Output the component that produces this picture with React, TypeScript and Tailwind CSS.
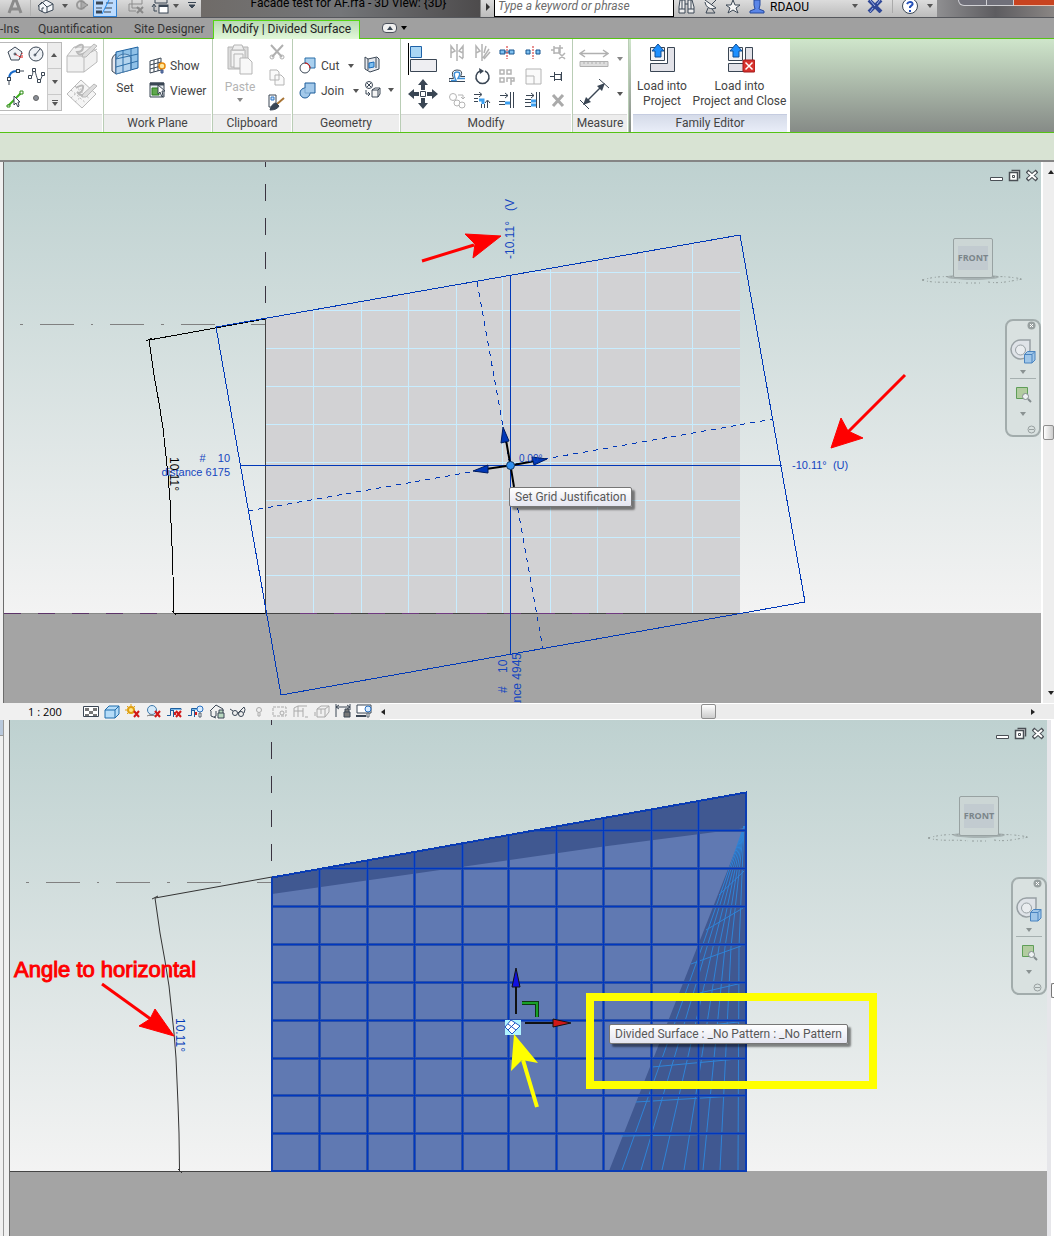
import type { ReactNode } from "react";

const INK = "#3a4654";
const BLUE = "#0038b8";

function Svg({ w, h, children }: { w: number; h: number; children: ReactNode }) {
    return (
        <svg width={w} height={h} viewBox={`0 0 ${w} ${h}`} fill="none" stroke={INK} className="shrink-0" aria-hidden="true">
            {children}
        </svg>
    );
}

function Caret({ className = "text-[#555]" }: { className?: string }) {
    return (
        <svg width="6" height="4" viewBox="0 0 6 4" className={`shrink-0 ${className}`} aria-hidden="true">
            <path d="M0 0h6L3 4z" fill="currentColor" />
        </svg>
    );
}

/* ---------- quick access bar ---------- */

function TitleBar() {
    return (
        <header className="flex h-[18px] overflow-hidden border-b border-[#55575c] bg-[#c9c9c9]">
            <div className="flex w-[201px] shrink-0 items-start bg-linear-to-b from-[#dadada] to-[#b8b8b8]">
                <button aria-label="Application menu" className="flex w-[31px] justify-center border-r border-[#b0b0b0]">
                    <Svg w={16} h={16}>
                        <path d="M2 13L7 0H9L14 13M4 9H12" stroke="#8b8b8b" strokeWidth="3" />
                    </Svg>
                </button>
                <button aria-label="Home" className="flex w-6 justify-end pr-px">
                    <Svg w={17} h={14}>
                        <path d="M1 6L9 0L16 4V10L8 13L2 10V6z" fill="#f4f6f8" />
                        <path d="M1 6L5 2L10 7V13M10 7L16 4M5 12V8H7" />
                    </Svg>
                </button>
                <span className="ml-1 flex h-4 w-3 items-center justify-center pb-1"><Caret /></span>
                <button aria-label="Redo" className="ml-1 flex">
                    <Svg w={14} h={13}>
                        <circle cx="6" cy="5" r="4" stroke="#999" strokeWidth="2" />
                        <path d="M6 1L13 5L6 9z" fill="#aaa" stroke="#8b8b8b" />
                    </Svg>
                </button>
                <button aria-label="Thin lines" className="ml-1 flex h-[17px] w-6 items-start justify-center border border-t-0 border-[#2f7fd0] bg-[#bcdcff]">
                    <Svg w={20} h={14}>
                        <path d="M1 3H8M1 12H7" strokeWidth="3" />
                        <path d="M1 8H7M11 3H18M10 8H17M9 12H16" />
                        <path d="M14 0L7 14" stroke="#1e88f0" />
                    </Svg>
                </button>
                <button aria-label="Close hidden windows" className="ml-[11px] flex">
                    <Svg w={17} h={14}>
                        <path d="M4 0V4H14V0M1 4V11H8M1 4H4M4 4V8H12" stroke="#8d8d8d" />
                        <path d="M9 7L15 13M15 7L9 13" stroke="#888" strokeWidth="2" />
                    </Svg>
                </button>
                <button aria-label="Switch windows" className="ml-1.5 flex">
                    <Svg w={19} h={14}>
                        <path d="M4 0V3H16V0" />
                        <rect x="8" y="5" width="9" height="8" fill="#fff" />
                        <path d="M8 6H17" strokeWidth="2" />
                        <path d="M3 5V11H6M1 7L3 4L5 7" />
                    </Svg>
                </button>
                <span className="flex h-4 w-3 items-center justify-center pb-1"><Caret /></span>
                <button aria-label="Customize toolbar" className="ml-1.5 flex">
                    <Svg w={8} h={10}>
                        <path d="M0 2.5H8" />
                        <path d="M1 5H7L4 8z" fill={INK} />
                    </Svg>
                </button>
            </div>
            <h1 className="min-w-0 flex-1 bg-linear-to-r from-[#6f6b68] via-[#747679] to-[#4d4b4c] pl-4 text-center text-[12px] leading-[6px] whitespace-nowrap text-black">
                Facade test for AF.rfa - 3D View: {"{3D}"}
            </h1>
            <div className="flex w-[457px] shrink-0 items-start bg-linear-to-b from-[#dcdcdc] to-[#bcbcbc]">
                <button aria-label="Collapse search" className="flex h-[17px] w-[14px] shrink-0 items-center justify-center border-l border-[#888] pb-1">
                    <Svg w={4} h={8}>
                        <path d="M0 0L4 4L0 8z" fill="#333" stroke="none" />
                    </Svg>
                </button>
                <input
                    aria-label="Search"
                    placeholder="Type a keyword or phrase"
                    className="h-[17px] w-[180px] shrink-0 border border-t-0 border-black bg-white px-[3px] pb-1 text-[12px] italic placeholder:text-[#6c6c6c]"
                />
                <button aria-label="Find" className="ml-1 flex">
                    <Svg w={17} h={14}>
                        <path d="M2 0H7V13H1V7zM10 0H14L16 7V13H10z" fill="#eee" />
                        <path d="M7 4H10M1 9H7M10 9H16M4 0V9M13 0V9" />
                    </Svg>
                </button>
                <button aria-label="Subscription" className="ml-2 flex">
                    <Svg w={16} h={14}>
                        <path d="M2 2C3 8 8 10 13 8L2 0" fill="#f4f4f4" />
                        <path d="M8 5L13 0M5 8L3 13H12L9 9" />
                    </Svg>
                </button>
                <button aria-label="Favorites" className="ml-[6px] flex">
                    <Svg w={16} h={14}>
                        <path d="M8 0L10 5H15L11 8L13 13L8 10L3 13L5 8L1 5H6z" fill="#f4f4f4" />
                    </Svg>
                </button>
                <button className="ml-2 flex text-[12px] leading-[14px] text-black">
                    <Svg w={16} h={14}>
                        <path d="M5 0H11V5L10 9L15 11V13H1V11L6 9L5 5z" fill="#5b86e8" stroke="#274a9e" />
                    </Svg>
                    <span className="ml-[5px]">RDAOU</span>
                </button>
                <span className="ml-auto flex h-4 items-center pb-1"><Caret /></span>
                <button aria-label="Exchange apps" className="ml-[9px] flex w-[26px] border-r border-[#aaa]">
                    <Svg w={16} h={13}>
                        <path d="M2 0L14 12M14 0L2 12" stroke="#2f4796" strokeWidth="4" />
                        <path d="M3 0L8 6M13 0L10 4M3 12L6 8" stroke="#9fb4ea" strokeWidth="1" />
                    </Svg>
                </button>
                <button aria-label="Help" className="ml-2 flex">
                    <Svg w={18} h={15}>
                        <circle cx="9" cy="6" r="7.5" fill="#fff" />
                        <path d="M6 4Q7 2 9 2Q12 2 11.500 4.500L9 7V8M9 10V12" stroke="#2450b8" strokeWidth="2" />
                    </Svg>
                </button>
                <span className="mr-1 ml-2 flex h-4 items-center pb-1"><Caret /></span>
            </div>
            <div className="flex w-[117px] shrink-0 justify-end bg-linear-to-r from-[#8f8f91] via-[#5d5c60] to-[#8a8684]">
                <button aria-label="Minimize" className="flex h-[6px] w-[29px] justify-center rounded-bl-md border border-t-0 border-[#d0d0d4] bg-[#70707a]" />
                <button aria-label="Maximize" className="flex h-[6px] w-[27px] justify-center border-r border-b border-[#d0d0d4] bg-[#70707a]" />
                <button aria-label="Close" className="flex h-[6px] w-10 justify-center border-b border-[#e8c0b0] bg-[#c8431f]" />
            </div>
        </header>
    );
}

function Tabs() {
    return (
        <nav className="flex h-[21px] items-end border-b border-[#55c314] bg-[#a0a0a0] text-[12px] leading-[18px] whitespace-nowrap text-[#333]">
            <a href="#ins" className="w-[38px]">-Ins</a>
            <a href="#quantification" className="w-24">Quantification</a>
            <a href="#site" className="w-[79px]">Site Designer</a>
            <a href="#modify" className="-mb-px h-[19px] w-[147px] border-x border-t border-[#55d614] bg-linear-to-b from-[#b9d9b4] to-[#e2f8d9] text-center leading-4 text-[#222]">
                Modify | Divided Surface
            </a>
            <button aria-label="Minimize ribbon" className="mb-[5px] ml-[22px] flex h-[10px] w-[15px] items-center justify-center rounded-sm border border-[#4a4f5a] bg-[#f0f0f0]">
                <Svg w={6} h={4}><path d="M0 4H6L3 0z" fill={INK} stroke="none" /></Svg>
            </button>
            <span className="mb-2 ml-1 flex"><Caret className="text-black" /></span>
        </nav>
    );
}

/* ---------- ribbon ---------- */

function Panel({ title, width, children, blue }: { title: string; width: string; children: ReactNode; blue?: boolean }) {
    return (
        <section className={`flex h-[93px] shrink-0 flex-col bg-white ${width} ${blue ? "border-x-2 border-white" : "border-r border-[#b9cdb5]"}`}>
            <div className="flex min-h-0 flex-1">{children}</div>
            <h2 className={`mr-px h-[18px] border-t text-center text-[12px] leading-4 whitespace-nowrap text-[#444] ${blue ? "border-[#c5cce0] bg-linear-to-b from-[#d5dbe9] to-[#e9edf8]" : "border-[#d8d8d8] bg-[#ededed]"}`}>
                {title}
            </h2>
        </section>
    );
}

function DrawPanel() {
    return (
        <Panel title="" width="w-[104px]">
            <div className="mt-[3px] flex h-[69px] w-[62px] border border-l-0 border-[#b9b9b9]">
                <div className="grid flex-1 grid-cols-2 place-items-center pl-1">
                    <button aria-label="Polygon"><Svg w={18} h={18}>
                        <path d="M9 2L16 7L13 15H5L2 7z" fill="#eef1f5" />
                        <path d="M9 9L16 13V8" stroke="#e01010" strokeDasharray="3 1" />
                        <circle cx="9" cy="9" r="1" />
                    </Svg></button>
                    <button aria-label="Circle"><Svg w={18} h={18}>
                        <circle cx="9" cy="9" r="7" fill="#eef1f5" /><path d="M8 10L13 4" /><circle cx="8" cy="10" r="1" />
                    </Svg></button>
                    <button aria-label="Fillet arc"><Svg w={18} h={18}>
                        <path d="M3 12Q3 4 11 4" stroke="#1668c8" strokeWidth="2" /><path d="M3 14V18M13 4H18" />
                        <rect x="1.500" y="10.500" width="3" height="3" fill="#fff" /><rect x="10.500" y="2.500" width="3" height="3" fill="#fff" />
                    </Svg></button>
                    <button aria-label="Spline"><Svg w={18} h={18}>
                        <path d="M3 10C7 10 5 2 7 3S10 16 13 14L16 7" />
                        <path d="M1.500 8.500h3v3h-3zM5.500 1.500h3v3h-3zM10.500 12.500h3v3h-3zM14.500 5.500h3v3h-3z" fill="#fff" />
                    </Svg></button>
                    <button aria-label="Pick lines"><Svg w={18} h={18}>
                        <path d="M2 16L16 2" stroke="#3eb01c" strokeWidth="2" /><path d="M1 15h3v2h-3zM14 1h3v3h-3z" fill="#fff" stroke="#2b8a10" />
                        <path d="M8 6V15L10 13L12 17L13 16L12 12H14z" fill="#fff" />
                    </Svg></button>
                    <button aria-label="Point"><Svg w={18} h={18}><circle cx="9" cy="8" r="2.500" fill="#8a8f98" stroke="#666" /></Svg></button>
                </div>
                <div className="flex w-[14px] flex-col border-l border-[#c9c9c9] bg-[#ececec]">
                    <button aria-label="Scroll up" className="flex flex-1 rotate-180 items-center justify-center"><Caret /></button>
                    <button aria-label="Scroll down" className="flex flex-1 items-center justify-center border-y border-[#c9c9c9]"><Caret /></button>
                    <button aria-label="Expand gallery" className="flex h-[15px] flex-col items-center justify-center gap-px"><span className="h-px w-[6px] bg-[#555]" /><Caret /></button>
                </div>
            </div>
            <div className="ml-1 flex flex-col gap-[5px] pt-1">
                <button aria-label="Draw on face"><Svg w={32} h={31}>
                    <g stroke="#b9b9b9" fill="#f0f0f0">
                        <path d="M1 13L8 4H25L31 9V19L18 29H1z" /><path d="M1 13H18L31 6M18 13V29" fill="none" />
                        <path d="M9 5Q17 -1 17 4T11 9Q13 14 20 9" fill="none" strokeWidth="2" />
                        <path d="M17 11L28 1L31 3L20 14L16 14z" fill="#ddd" />
                    </g>
                </Svg></button>
                <button aria-label="Draw on work plane"><Svg w={32} h={31}>
                    <g stroke="#b9b9b9" fill="#f5f5f5">
                        <path d="M1 15L15 1L30 15L16 29z" /><path d="M5 11L21 25M9 7L25 21M5 19L20 5M9 23L25 9" strokeDasharray="2 2" />
                        <path d="M10 9Q18 4 17 9T12 14Q14 18 20 14" fill="none" strokeWidth="2" />
                        <path d="M17 15L28 5L31 7L20 18L16 18z" fill="#ddd" />
                    </g>
                </Svg></button>
            </div>
        </Panel>
    );
}

function WorkPlanePanel() {
    return (
        <Panel title="Work Plane" width="w-[109px]">
            <button className="flex w-[42px] flex-col items-center pt-[7px] text-[12px] leading-[14px] text-[#444]">
                <Svg w={28} h={30}>
                    <path d="M1 13Q2 9 5 8V28L1 25z" fill="#e8e8ee" />
                    <path d="M5 6L27 1V22L5 28z" fill="#8fc1e8" stroke="#1a5f9e" />
                    <path d="M5 13Q8 8 14 8Q19 8 20 12V24L5 28z" fill="#b4d4ee" stroke="#4a7ba8" />
                    <path d="M5 13L27 8M5 21L27 15M12 4V26M20 3V24" stroke="#2e6fa8" />
                </Svg>
                <span className="mt-[5px]">Set</span>
            </button>
            <div className="flex flex-col gap-2 pt-[18px] pl-[3px] text-[12px] leading-4 text-[#444]">
                <button className="flex items-center gap-1"><Svg w={17} h={17}>
                    <path d="M1 4L12 1V13L1 16zM1 8L12 5M1 12L12 9M5 3V15M9 2V14" />
                    <circle cx="13" cy="9" r="3" fill="#ffe9a0" stroke="#e8890c" strokeWidth="1.500" /><path d="M12 13h2v3h-2z" fill="#6c86b8" stroke="#41598c" />
                </Svg>Show</button>
                <button className="flex items-center gap-1"><Svg w={17} h={17}>
                    <path d="M1 1H15V15H1z" fill="#e8edf2" /><path d="M1 2H15" strokeWidth="3" />
                    <path d="M3 6H10V13H3z" fill="#5ea84c" stroke="#2b7a1c" /><path d="M9 3V12L11 10L13 15L14 14L13 9H16z" fill="#fff" />
                </Svg>Viewer</button>
            </div>
        </Panel>
    );
}

function ClipboardPanel() {
    return (
        <Panel title="Clipboard" width="w-20">
            <button disabled className="flex w-[54px] flex-col items-center pt-1 text-[12px] leading-[14px] text-[#b4b4b4]">
                <Svg w={28} h={32}>
                    <g stroke="#b5b5b5">
                        <path d="M2 4H22V26H2z" fill="#dcdcdc" /><path d="M5 7H19V24H5z" fill="#f4f4f4" /><path d="M8 2H16L18 7H6z" fill="#eee" />
                        <path d="M8 11H17V25H8z" fill="#f4f4f4" /><path d="M14 15H22L26 19V31H14z" fill="#f8f8f8" />
                    </g>
                </Svg>
                <span className="mt-[5px] mb-1">Paste</span>
                <Caret className="text-[#888]" />
            </button>
            <div className="flex flex-col items-center gap-2 pt-[5px] pl-px">
                <button disabled aria-label="Cut to clipboard"><Svg w={16} h={17}>
                    <path d="M2 1L13 13M14 1L3 13" stroke="#b0b0b0" strokeWidth="2" /><circle cx="3" cy="13" r="2" stroke="#b0b0b0" /><circle cx="13" cy="13" r="2" stroke="#b0b0b0" />
                </Svg></button>
                <button disabled aria-label="Copy to clipboard"><Svg w={16} h={17}>
                    <path d="M1 1H8L10 3V11H1zM6 6H12L15 9V16H6z" fill="#fafafa" stroke="#b5b5b5" />
                </Svg></button>
                <button aria-label="Match type"><Svg w={17} h={17}>
                    <path d="M1 1H8V13H1z" fill="#fff" /><path d="M3 3H6V6H3z" fill="#cfe4fa" stroke="#2a74c4" />
                    <path d="M16 4L9 10" stroke="#a87434" strokeWidth="2" /><path d="M2 16Q4 9 8 9L11 12Q9 16 2 16z" fill={INK} />
                </Svg></button>
            </div>
        </Panel>
    );
}

function GeometryPanel() {
    return (
        <Panel title="Geometry" width="w-[108px]">
            <div className="flex w-[66px] flex-col gap-2 pt-[18px] pl-[6px] text-[12px] leading-4 text-[#444]">
                <button className="flex items-center gap-[5px]"><Svg w={17} h={17}>
                    <path d="M6 1H16V11H6z" fill="#a9d0ef" stroke="#2b6ea8" /><circle cx="6" cy="11" r="5" fill="#fff" /><path d="M6 6A5 5 0 0 1 11 11" stroke="#e01010" />
                </Svg>Cut<span className="ml-1"><Caret /></span></button>
                <button className="flex items-center gap-[5px]"><Svg w={17} h={17}>
                    <path d="M6 1H16V11H11A5 5 0 1 1 6 6z" fill="#a3c9ea" stroke="#1c5c9a" /><path d="M11 11H6V6" stroke="#7aa8d0" />
                </Svg>Join<span className="ml-1"><Caret /></span></button>
            </div>
            <div className="ml-[5px] flex flex-col gap-2 pt-[17px]">
                <button aria-label="Split face" className="flex"><Svg w={17} h={17}>
                    <path d="M1 1L4 3L13 1L15 3V13L6 16L1 13z" fill="#e6e9ee" /><path d="M4 3V14M12 2V12" /><path d="M5 7L10 6V11L5 12z" fill="#7fc0f0" stroke="#1a6ab8" />
                </Svg></button>
                <button aria-label="Demolish" className="flex items-center gap-[6px]"><Svg w={18} h={17}>
                    <circle cx="5" cy="4" r="3.500" /><path d="M3 2L7 6M7 2L3 6M2 9V13H5M4 11L6 13L4 15" />
                    <path d="M8 9L11 7H16V13L14 16H8zM8 9H14L16 7M14 9V16" fill="#f4f4f4" />
                </Svg><Caret /></button>
            </div>
        </Panel>
    );
}

function ModifyPanel() {
    const gray = "#b4b4b4";
    return (
        <Panel title="Modify" width="w-[172px]">
            <div className="flex w-11 flex-col items-center gap-[3px] pt-1">
                <button aria-label="Align"><Svg w={32} h={32}>
                    <path d="M1.500 0V32" stroke="#000" /><path d="M3.500 3.500H14.500V14.500H3.500z" fill="#a9d6f5" stroke="#1e62a8" /><path d="M3.500 16.500H29.500V28.500H3.500z" fill="#eeeef2" />
                </Svg></button>
                <button aria-label="Move"><Svg w={32} h={32}>
                    <path d="M16 1L21 7H18V12H14V7H11zM16 31L21 25H18V20H14V25H11zM1 16L7 11V14H12V18H7V21zM31 16L25 11V14H20V18H25V21z" fill={INK} stroke="none" />
                    <path d="M13.500 13.500h5v5h-5z" fill="#fff" />
                </Svg></button>
            </div>
            <div className="grid h-[73px] w-[126px] grid-cols-5 place-items-center pt-[2px]">
                <button disabled aria-label="Mirror pick axis"><Svg w={17} h={17}><path d="M2 14V2L6 7L2 9M8 0V17M14 14V2L10 7L14 9M10 12L14 15" stroke={gray} strokeWidth="1.500" /></Svg></button>
                <button disabled aria-label="Mirror draw axis"><Svg w={17} h={17}><path d="M2 14V2L6 7L2 9M8 0V17M12 2L10 9M15 5L9 14M16 8L10 15" stroke={gray} strokeWidth="1.500" /></Svg></button>
                <button aria-label="Split element"><Svg w={17} h={17}><path d="M1 6H6V10H1zM10 6H15V10H10z" fill="#7fc0f0" stroke="#17548f" /><path d="M5 8H11" stroke="#17548f" /><path d="M8 2V15" stroke="#d02020" strokeDasharray="2 1" /></Svg></button>
                <button aria-label="Split with gap"><Svg w={17} h={17}><path d="M1 6H5V10H1zM11 6H15V10H11z" fill="#7fc0f0" stroke="#17548f" /><path d="M8 2V15" stroke="#d02020" strokeDasharray="2 1" /></Svg></button>
                <button disabled aria-label="Unpin"><Svg w={17} h={17}><path d="M1 6H4M4 2V10M4 4H9V9H4M10 1V9M10 4H13M9 9L15 15M15 9L9 15" stroke={gray} strokeWidth="1.500" /></Svg></button>
                <button aria-label="Offset"><Svg w={17} h={17}><path d="M0 13.500H16M0 14V10.500H4.500Q1 2 8 2T11.500 8.500H16" /><path d="M2 12.500H7Q3 4 8 4T9 10.500H16" stroke="#3d8fd8" strokeWidth="1.500" /></Svg></button>
                <button aria-label="Rotate"><Svg w={17} h={17}><path d="M11 3A6.500 6.500 0 1 1 6 3" strokeWidth="1.500" /><path d="M5 0L10 3L6 6z" fill={INK} stroke="none" /></Svg></button>
                <button disabled aria-label="Array"><Svg w={17} h={17}><path d="M1 2H5V6H1zM8 2H12V6H8zM1 10H5V14H1zM12 10H8V14M12 17V10H15V13H12" stroke={gray} strokeWidth="1.500" /></Svg></button>
                <button disabled aria-label="Scale"><Svg w={17} h={17}><path d="M1 1H16V16H1zM1 8H9V16" fill="#fafafa" stroke={gray} /></Svg></button>
                <button aria-label="Pin"><Svg w={17} h={17}><path d="M0 8.500H4M4.500 4V13M5 6.500H11V11.500H5M11.500 4V13" /></Svg></button>
                <button disabled aria-label="Copy"><Svg w={17} h={17}><circle cx="4" cy="5" r="3.500" stroke={gray} /><path d="M9 3H14V7M12 5L14 7L16 5" stroke={gray} /><circle cx="8" cy="11" r="3" stroke={gray} /><circle cx="13" cy="13" r="3" fill="#fff" stroke={gray} /></Svg></button>
                <button aria-label="Trim to corner"><Svg w={17} h={17}><path d="M0 2.500H7M5 0L8 2.500L5 5M0 6.500H4M0 9.500H4M13.500 16V9M11 11L13.500 8L16 11M7.500 12V16M10.500 12V16" /><path d="M5 8H9V12" stroke="#3da0f0" strokeWidth="3" /></Svg></button>
                <button aria-label="Trim single"><Svg w={17} h={17}><path d="M1 3.500H9M6 1L9 3.500L6 6M0 9.500H6M0 12.500H6M11.500 0V16M14.500 0V16" /><path d="M6 11H11" stroke="#3da0f0" strokeWidth="3" /></Svg></button>
                <button aria-label="Trim multiple"><Svg w={17} h={17}><path d="M1 3.500H9M6 1L9 3.500L6 6M0 7.500H6M0 10.500H6M0 14.500H6M11.500 0V16M14.500 0V16" /><path d="M6 9H11M6 13H11" stroke="#3da0f0" strokeWidth="3" /></Svg></button>
                <button disabled aria-label="Delete"><Svg w={17} h={17}><path d="M3 3L13 14M13 3L3 14" stroke="#aaa" strokeWidth="3" /></Svg></button>
            </div>
        </Panel>
    );
}

function MeasurePanel() {
    return (
        <Panel title="Measure" width="w-[56px]">
            <div className="flex flex-col gap-2 pt-2 pl-1.5">
                <button disabled aria-label="Measure distance" className="flex h-6 items-center gap-2"><Svg w={30} h={20}>
                    <path d="M2 4.500H28M6 1L1 4.500L6 8M24 1L29 4.500L24 8" stroke="#b0b0b0" strokeWidth="1.500" />
                    <path d="M1 12.500H29V17.500H1z" fill="#ddd" stroke="#b0b0b0" /><path d="M5 12V15M9 12V15M13 12V15M17 12V15M21 12V15M25 12V15" stroke="#b0b0b0" />
                </Svg><Caret className="text-[#888]" /></button>
                <button aria-label="Aligned dimension" className="flex items-center gap-2"><Svg w={30} h={30}>
                    <path d="M6 24L24 6" strokeWidth="1.500" /><path d="M4 26L7 18L12 23zM26 4L23 12L18 7z" fill={INK} stroke="none" />
                    <path d="M1 21L10 30M20 0L30 9" />
                </Svg><Caret /></button>
            </div>
        </Panel>
    );
}

function LoadGlyph({ close }: { close?: boolean }) {
    return (
        <Svg w={30} h={31}>
            <path d="M3.500 5.500H17.500V18.500H3.500z" fill="#f2f2f5" />
            <path d="M20.500 5.500H27.500V29.500H3.500V21.500H20.500z" fill="#e2e2e8" />
            <path d="M11 2L17 9H14V15H8V9H5z" fill="#1e90ff" stroke="#0d4f98" />
            {close && <>
                <rect x="18" y="18" width="12" height="12" rx="1" fill="#d8332e" stroke="#a01818" />
                <path d="M20.500 20.500L27.500 27.500M27.500 20.500L20.500 27.500" stroke="#fff" strokeWidth="1.500" />
            </>}
        </Svg>
    );
}

function Ribbon() {
    return (
        <div className="flex border-b border-[#55c314] bg-linear-to-b from-[#cfe6cb] to-[#868b87]">
            <DrawPanel />
            <WorkPlanePanel />
            <ClipboardPanel />
            <GeometryPanel />
            <ModifyPanel />
            <MeasurePanel />
            <div className="ml-[2px]">
                <Panel title="Family Editor" width="w-[159px]" blue>
                    <button className="flex w-[58px] flex-col items-center pt-[3px] text-[12px] leading-[15px] whitespace-nowrap text-[#444]">
                        <LoadGlyph />
                        <span className="mt-[6px]">Load into<br />Project</span>
                    </button>
                    <button className="flex flex-1 flex-col items-center pt-[3px] text-[12px] leading-[15px] whitespace-nowrap text-[#444]">
                        <LoadGlyph close />
                        <span className="mt-[6px]">Load into<br />Project and Close</span>
                    </button>
                </Panel>
            </div>
        </div>
    );
}

/* ---------- view overlays ---------- */

function ViewControls() {
    return (
        <div className="absolute top-[6px] right-[3px] flex items-center gap-[5px]">
            <button aria-label="Minimize view"><Svg w={13} h={14}><path d="M.5 9.500h12v3H.5z" fill="#fff" stroke="#4a4f55" /></Svg></button>
            <button aria-label="Restore view"><Svg w={13} h={14}><path d="M3.500 2.500h8v8M1.500 4.500h8v8h-8z" fill="#fff" stroke="#4a4f55" strokeWidth="1.500" /><path d="M4.500 7.500h2v2h-2z" stroke="#4a4f55" /></Svg></button>
            <button aria-label="Close view"><Svg w={12} h={14}><path d="M1 3L11 12M11 3L1 12" stroke="#4a4f55" strokeWidth="4" /><path d="M2 4L10 11M10 4L2 11" stroke="#fff" strokeWidth="2" /></Svg></button>
        </div>
    );
}

function ViewCube() {
    return (
        <div className="absolute top-[76px] right-[15px] flex w-[106px] flex-col items-center">
            <button className="z-10 flex h-10 w-10 items-center justify-center rounded-xs border border-[#98a2a2] bg-[#ccd6d5]">
                <span className="bg-[#c2cbd0] py-1 font-['Open_Sans',sans-serif] text-[9px] leading-4 font-bold text-[#7b858a]">FRONT</span>
            </button>
            <svg width="106" height="12" viewBox="0 0 106 12" className="-mt-1" aria-hidden="true">
                <ellipse cx="53" cy="3" rx="26" ry="3" fill="#98a3a3" opacity=".7" />
                <path d="M2 6C20 1 30 3 38 3M2 6C16 10 30 7 42 9M46 9H62M68 8C80 10 90 7 103 5C90 3 82 2 72 3" fill="none" stroke="#87908f" strokeDasharray="2 3 1 2" opacity=".8" />
            </svg>
        </div>
    );
}

function NavigationBar() {
    return (
        <div className="absolute top-[157px] right-0 flex h-[118px] w-[36px] flex-col items-center rounded-lg border-2 border-[#a2acac] bg-[#d9e1e0]">
            <button aria-label="Close navigation bar" className="mr-[3px] self-end"><Svg w={9} h={9}><circle cx="4.500" cy="4.500" r="4" fill="#98a0a0" stroke="none" /><path d="M3 3L6 6M6 3L3 6" stroke="#fff" /></Svg></button>
            <button aria-label="Steering wheel" className="mt-[9px] flex"><Svg w={26} h={25}>
                <path d="M11 1H20V11A9.500 9.500 0 1 1 11 1z" fill="#dfe3e8" stroke="#98a0a4" strokeWidth="1.500" /><circle cx="10.500" cy="11" r="5" fill="#e9ecef" stroke="#98a0a4" />
                <path d="M14.500 15.500L17.500 12.500H25V21L22 24H14.500zM14.500 15.500H22V24M22 15.500L25 12.500" fill="#a0c6e8" stroke="#4a84c0" />
            </Svg></button>
            <span className="mt-[6px] flex"><Caret className="text-[#8a9292]" /></span>
            <span className="mt-1 h-px w-[26px] bg-[#a6b0b0]" />
            <button aria-label="Zoom region" className="mt-[7px] flex"><Svg w={17} h={17}>
                <path d="M1.500 1.500h11v11h-11z" fill="#b2cca0" stroke="#5f9e58" /><circle cx="10.500" cy="10.500" r="3" fill="#edf1f2" stroke="#838c8e" /><path d="M13 13L16 16" stroke="#838c8e" strokeWidth="2" />
            </Svg></button>
            <span className="mt-[9px] flex"><Caret className="text-[#8a9292]" /></span>
            <button aria-label="Navigation options" className="mt-auto mr-[3px] mb-px self-end"><Svg w={9} h={9}><circle cx="4.500" cy="4.500" r="3.500" stroke="#98a0a0" /><path d="M2 4.500H7" stroke="#98a0a0" /></Svg></button>
        </div>
    );
}

function Tooltip({ className, children }: { className: string; children: ReactNode }) {
    return (
        <div role="tooltip" className={`absolute rounded-xs border border-[#767676] bg-linear-to-b from-white to-[#e4e5f0] px-[5px] text-[12px] leading-[18px] whitespace-nowrap text-[#575757] shadow-[3px_3px_2px_rgba(0,0,0,0.45)] ${className}`}>
            {children}
        </div>
    );
}

/* ---------- drawings ---------- */

const COLS = [313, 361, 408, 456, 502, 550, 597, 645, 692];
const ROWS = [272, 310, 348, 386, 424, 462, 500, 537, 575];
const ARC = "M149 340L154 375L159 403L163 428L168 475L170 500L172 546L173 575L173.500 613";

function GridScene() {
    return (
        <svg width="1037" height="541" viewBox="4 162 1037 541" fill="none" fontFamily="'Liberation Sans', Arial, sans-serif" className="absolute top-0 left-0">
            <defs>
                <clipPath id="face"><path d="M266 319L740 235V613H266z" /></clipPath>
                <clipPath id="vlabel"><path d="M500 199H522V262H500z" /></clipPath>
            </defs>
            <path d="M266 319L740 235V613H266z" fill="#d2d2d4" />
            <g clipPath="url(#face)" stroke="#c8edff" shapeRendering="crispEdges">
                {COLS.map((x) => <path key={x} d={`M${x + 0.5} 230V613`} />)}
                {ROWS.map((y) => <path key={y} d={`M266 ${y + 0.5}H740`} />)}
            </g>
            <g shapeRendering="crispEdges">
                <path d="M265.500 162V318" stroke="#3a3340" strokeDasharray="17 17" strokeDashoffset="12" />
                <path d="M20 324.500H265" stroke="#808080" strokeDasharray="3 17 34 17 2 17 34 17" />
                <path d="M4 613.500H174" stroke="#888" />
                <path d="M4 613.500H174" stroke="#5c3468" strokeDasharray="17 17" />
                <path d="M265.500 319V613" stroke="#404040" />
                <path d="M174 613.500H265" stroke="#000" />
                <path d="M265 613.500H740" stroke="#444" />
                <path d="M300 613.500H640" stroke="#6f3a80" strokeDasharray="17 17" />
                <path d="M265 319L149 340" stroke="#000" />
                <path d={ARC} stroke="#000" />
                <path d="M146 341L152 338M172 611L176 615" stroke="#000" />
            </g>
            <g stroke={BLUE} shapeRendering="crispEdges">
                <path d="M216 327L740 235L805 602L281 695z" />
                <path d="M510.500 275V655" /><path d="M241 465.500H782" />
                <path d="M477 282L543 649M248 511L773 419" strokeDasharray="5 5" />
            </g>
            <path d="M510.500 465.500L514 487M510.500 465.500L535 461M510.500 465.500L486 469M510.500 465.500L506 440" stroke="#000" strokeWidth="2" />
            <path d="M547 459L532 457L534 465zM473 471L488 465V473zM503 427L501 443L509 441z" fill={BLUE} stroke="#001c60" />
            <circle cx="510.500" cy="465.500" r="4" fill="#2f8ff0" stroke="#16385f" />
            <g fill="#1446c0" fontSize="11">
                <text x="230" y="462" textAnchor="end" xmlSpace="preserve">#    10</text>
                <text x="230" y="476" textAnchor="end">distance 6175</text>
                <text x="792" y="469" xmlSpace="preserve">-10.11°  (U)</text>
                <text x="519" y="462" fontSize="10">0.00°</text>
            </g>
            <g fill="#1446c0" fontSize="12">
                <g clipPath="url(#vlabel)"><text transform="translate(514 259) rotate(-90)" xmlSpace="preserve">-10.11°   (V)</text></g>
                <text transform="translate(507 693) rotate(-90)" xmlSpace="preserve">#    10</text>
                <text transform="translate(521 653) rotate(-90)" textAnchor="end">distance 4945</text>
                <text transform="translate(170 457) rotate(90)" fill="#000">10.11°</text>
            </g>
            <g fill="#f00" stroke="#f00">
                <path d="M422 261L474 245M905 375L848 432" strokeWidth="3" />
                <path d="M501 236L465 234L475 244L473 258zM831 448L841 418L848 431L863 438z" />
            </g>
        </svg>
    );
}

// x at mid height, x at the base
const FAN = [[702, 622], [707, 641], [713, 662], [719, 684], [725, 703], [731, 720], [739, 738]];

function SurfaceScene() {
    const lines = [
        ...COLS.map((x) => `M${x + 6.5} ${Math.round(877 - (x + 6 - 272) * 0.179)}V1171`),
        ...ROWS.map((y) => `M${y < 320 ? Math.round(272 + (319 - y) * 5.58) : 272} ${y + 558.5}H746`),
    ].join("");
    return (
        <svg width="1038" height="516" viewBox="10 720 1038 516" fill="none" fontFamily="'Liberation Sans', Arial, sans-serif" className="absolute top-0 left-0">
            <g shapeRendering="crispEdges">
                <path d="M271.500 720V876" stroke="#3a3340" strokeDasharray="17 17" strokeDashoffset="12" />
                <path d="M26 882.500H271" stroke="#808080" strokeDasharray="3 17 34 17 2 17 34 17" />
                <path d="M10 1171.500H272" stroke="#444" />
            </g>
            <path d="M272 877L746 792V1171H272z" fill="#6079b2" />
            <path d="M272 877L746 792V828L600 847L272 894zM745 826L609 1171H746z" fill="#405891" />
            <g stroke="#2f84d8">
                {FAN.map(([mid, end]) => <path key={end} d={`M744 826L${mid} 947L${end} 1170`} />)}
                <path d="M719 895L744 871M706 930L743 908M691 964L741 946M678 998L738 984M666 1030L738 1022M652 1067L737 1059M636 1102L735 1096M621 1136L746 1134" />
            </g>
            <g shapeRendering="crispEdges">
                <path d={lines} stroke="#2a50a8" strokeWidth="3" />
                <path d={lines} stroke="#0038c0" strokeWidth="1" />
                <path d="M272 877.500L746 792.500V1171H272z" stroke="#0a3cb4" strokeWidth="2" />
            </g>
            <path d="M272 877L155 898" stroke="#333" />
            <g transform="translate(6 558)" stroke="#333"><path d={ARC} /><path d="M146 341L152 338M172 611L176 615" /></g>
            <text transform="translate(176 1018) rotate(90)" fontSize="12" fill={BLUE}>10.11°</text>
            <text x="14" y="977" fontSize="22" fill="#f00" stroke="#f00" strokeWidth="1">Angle to horizontal</text>
            <g fill="#f00" stroke="#f00"><path d="M102 984L152 1020" strokeWidth="3" /><path d="M174 1036L155 1009L150 1019L139 1026z" /></g>

            <path d="M516 1014V986M525 1023H553" stroke="#111" strokeWidth="2" />
            <path d="M516 968L512 987H520z" fill="#1010e0" stroke="#111" />
            <path d="M571 1023L553 1019V1027z" fill="#d01818" stroke="#111" />
            <path d="M522 1003H537V1017" stroke="#0c3a10" strokeWidth="4" /><path d="M522 1003H537V1017" stroke="#18a028" strokeWidth="2" />
            <path d="M505 1020H521V1035H505z" fill="#b0f4ff" />
            <path d="M505 1027L511 1020L520 1026L512 1034z" fill="#fff" stroke="#1d56c4" /><path d="M508 1030L515 1023M508 1024L516 1030" stroke="#1d56c4" />
            <path d="M537 1107L523 1060" stroke="#ff0" strokeWidth="4" /><path d="M514 1034L511 1071L522 1060L538 1063z" fill="#ff0" />
            <path d="M590 997H873V1085H590z" stroke="#ff0" strokeWidth="8" />
        </svg>
    );
}

function GridView() {
    return (
        <div className="flex h-[543px] border-t-2 border-[#858585] bg-[#f0f0f0] pl-[3px]">
            <div className="relative min-w-0 flex-1 overflow-hidden border-l border-[#6c6c6c] bg-[linear-gradient(#bed1d0,#f3f3f3_451px,#a4a4a4_451px)]">
                <GridScene />
                <ViewControls />
                <ViewCube />
                <NavigationBar />
                <Tooltip className="top-[325px] left-[505px]">Set Grid Justification</Tooltip>
            </div>
            <div className="flex w-[13px] flex-col items-end justify-between border-l-2 border-white bg-[#eee] py-2">
                <span className="rotate-180"><Caret className="text-[#222]" /></span>
                <button aria-label="Scroll vertically" className="h-[15px] w-[11px] rounded-xs border border-[#8e8e8e] bg-linear-to-r from-white to-[#ccc]" />
                <Caret className="text-[#222]" />
            </div>
        </div>
    );
}

const RED_X = <path d="M9 7L14 13M14 7L9 13" stroke="#d01818" strokeWidth="2" />;
const LAMP = <><circle cx="12" cy="5" r="3" fill="#d8ecff" stroke="#2a70c0" /><path d="M11 9H13V13H11z" fill="#fff" stroke="#55606c" /></>;

const VIEW_TOOLS: [string, ReactNode][] = [
    ["Detail level", <><path d="M.5 2.500h15v10H.5z" fill="#fff" /><path d="M2 4h4v3H2zM10 4h4v3h-4zM6 7h4v3H6zM2 10h4v2H2zM10 10h4v2h-4z" fill="#777" stroke="none" /></>],
    ["Visual style", <path d="M1 6L5 2H15V10L11 14H1zM1 6H11V14M11 6L15 2" fill="#b5dcf8" stroke="#1f6cab" />],
    ["Sun path", <><circle cx="6" cy="6" r="3" fill="#ffe68a" stroke="#e0a010" strokeWidth="2" /><path d="M6 0V2M0 6H2M2 2L3 3M10 2L9 3M2 10L3 9" stroke="#e0a010" />{RED_X}</>],
    ["Shadows", <><circle cx="6" cy="6" r="4.500" fill="#d4eafa" stroke="#3e78aa" /><path d="M1 12Q5 9 9 12" fill="#888" stroke="#888" />{RED_X}</>],
    ["Crop view", <><path d="M0 11.500H3.500V4.500H14V6M6.500 6V13M3 6.500H7" stroke="#1e5f9e" /><path d="M4 5.500H13" stroke="#7ab8ea" /><path d="M8 8V11" stroke="#d02020" strokeWidth="2" />{RED_X}</>],
    ["Show crop region", <><path d="M0 11.500H3.500V4.500H9M6.500 6V13M3 6.500H7" stroke="#1e5f9e" /><path d="M4 5.500H9" stroke="#7ab8ea" /><path d="M8 8V11" stroke="#d02020" strokeWidth="2" />{LAMP}</>],
    ["Lock 3D view", <><path d="M1 7L7 1L14 5V7M2 7V12L7 14M7 7V12L5 13" /><path d="M9 9H15V14H9zM10 9V6H14V9" fill="#b9d8c0" /></>],
    ["Temporary hide", <><circle cx="5" cy="9" r="2.500" /><circle cx="11" cy="10" r="2.500" /><path d="M0 5L3 7M8 9L14 3Q16 5 14 9" /></>],
    ["Reveal hidden", <><circle cx="8" cy="6" r="2.500" stroke="#aaa" /><path d="M7 9V12H9V9" stroke="#aaa" /></>],
    ["Worksharing", <><path d="M1 3H14V12H1z" stroke="#aaa" strokeDasharray="3 1" /><circle cx="10" cy="9" r="2" stroke="#aaa" /></>],
    ["Analytical model", <path d="M1 13V4L5 2H14M1 7H10M5 2V13M10 4V13M12 13H15" stroke="#aaa" />],
    ["Highlight displacement", <path d="M3 5L7 2H15V8L11 13H3zM3 5H11V13M11 5L15 2M1 8V12M7 5V10" stroke="#aaa" />],
    ["Reveal constraints", <><path d="M1 0V13M15 0V6M1 3H15M4 1L1 3L4 5M12 1L15 3L12 5" /><path d="M9 8H15V13H9zM10 8V5H14V8" fill="#777" /></>],
    ["Preview visibility", <><path d="M1 1H15V9H1z" fill="#fff" /><path d="M0 12H10" strokeWidth="2" />{LAMP}</>],
];

function ViewControlBar() {
    return (
        <div className="flex h-[17px] items-center bg-[#f0f0f0] pl-7 text-[11px] leading-4 text-black">
            <button className="w-[55px] text-left whitespace-nowrap font-['Open_Sans',sans-serif]">1 : 200</button>
            <div className="flex gap-[5px]">
                {VIEW_TOOLS.map(([label, art]) => (
                    <button key={label} aria-label={label} className="flex w-4"><Svg w={16} h={15}>{art}</Svg></button>
                ))}
            </div>
            <div className="ml-2 flex h-full flex-1 items-center justify-between border-y border-white bg-[#ececec] pr-[18px]">
                <span className="rotate-90"><Caret className="text-[#222]" /></span>
                <button aria-label="Scroll horizontally" className="h-[15px] w-[15px] rounded-xs border border-[#8e8e8e] bg-linear-to-b from-white to-[#ccc]" />
                <span className="-rotate-90"><Caret className="text-[#222]" /></span>
            </div>
        </div>
    );
}

function SurfaceView() {
    return (
        <div className="flex h-[516px] bg-[#f0f0f0]">
            <div className="w-1 border-r border-[#999]">
                <div className="h-4 border-b border-[#999] bg-[#b9c8dc]" />
            </div>
            <div className="w-[5px]" />
            <div className="relative min-w-0 flex-1 overflow-hidden border-l border-[#6c6c6c] bg-[linear-gradient(#bed1d0,#f3f3f3_451px,#a4a4a4_451px)]">
                <SurfaceScene />
                <ViewControls />
                <ViewCube />
                <NavigationBar />
                <Tooltip className="top-[304px] left-[599px]">Divided Surface : _No Pattern : _No Pattern</Tooltip>
            </div>
            <div className="flex w-[7px] flex-col border-l-4 border-[#e6e6ea] bg-white pt-[263px]">
                <span className="h-[15px] rounded-l-xs border border-r-0 border-[#777]" />
            </div>
        </div>
    );
}

export default function App() {
    return (
        <main className="overflow-hidden bg-[#d8e3d3] font-[Roboto,sans-serif]">
            <TitleBar />
            <Tabs />
            <Ribbon />
            <div className="h-[27px] bg-[#d8e3d3]" />
            <GridView />
            <ViewControlBar />
            <SurfaceView />
        </main>
    );
}
